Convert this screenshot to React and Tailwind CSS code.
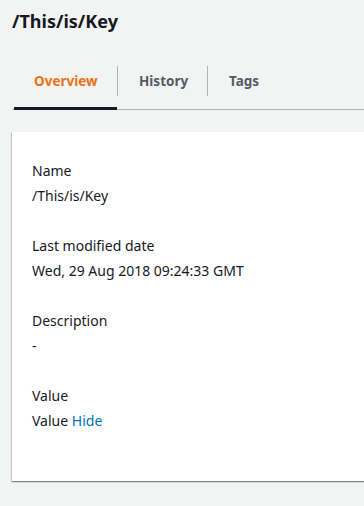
export default function App() {
  const fields = [
    ['Name', '/This/is/Key'],
    ['Last modified date', 'Wed, 29 Aug 2018 09:24:33 GMT'],
    ['Description', '-'],
  ]
  return (
    <div className="min-h-[506px] w-[364px] overflow-hidden bg-[#f2f3f3] font-['Noto_Sans','Open_Sans',sans-serif] text-[#16191f]">
      <h1 className="px-3 pt-[8px] text-[18px] font-bold leading-[26px]">/This/is/Key</h1>

      <div className="ml-3 mt-[25px] flex border-b border-[#aab7b8]">
        <div className="relative h-[50px] w-[105px] pl-[22px] pt-[12px] text-[13.5px] font-bold leading-[20px] text-[#ec7211]">
          Overview
          <span className="absolute bottom-[-1px] left-[2px] right-0 h-[3px] bg-[#16191f]" />
        </div>
        <div className="mt-[7px] h-[30px] w-px bg-[#aab7b8]" />
        <div className="h-[50px] w-[89px] pl-[21px] pt-[12px] text-[13.5px] font-bold leading-[20px] text-[#545b64]">History</div>
        <div className="mt-[7px] h-[30px] w-px bg-[#aab7b8]" />
        <div className="h-[50px] pl-[21px] pt-[12px] text-[13.5px] font-bold leading-[20px] text-[#545b64]">Tags</div>
      </div>

      <div className="ml-3 mt-[22px] w-[380px] bg-white px-5 pb-[48px] pt-[26px] shadow-[0_1px_1px_0_rgba(0,28,36,0.3),1px_1px_1px_0_rgba(0,28,36,0.15),-1px_1px_1px_0_rgba(0,28,36,0.15)]">
        {fields.map(([label, value]) => (
          <div key={label} className="mb-[25px] text-[14px] leading-[25px]">
            <div>{label}</div>
            <div>{value}</div>
          </div>
        ))}
        <div className="text-[14px] leading-[25px]">
          <div>Value</div>
          <div>
            Value <a className="text-[#0073bb]">Hide</a>
          </div>
        </div>
      </div>
    </div>
  )
}
